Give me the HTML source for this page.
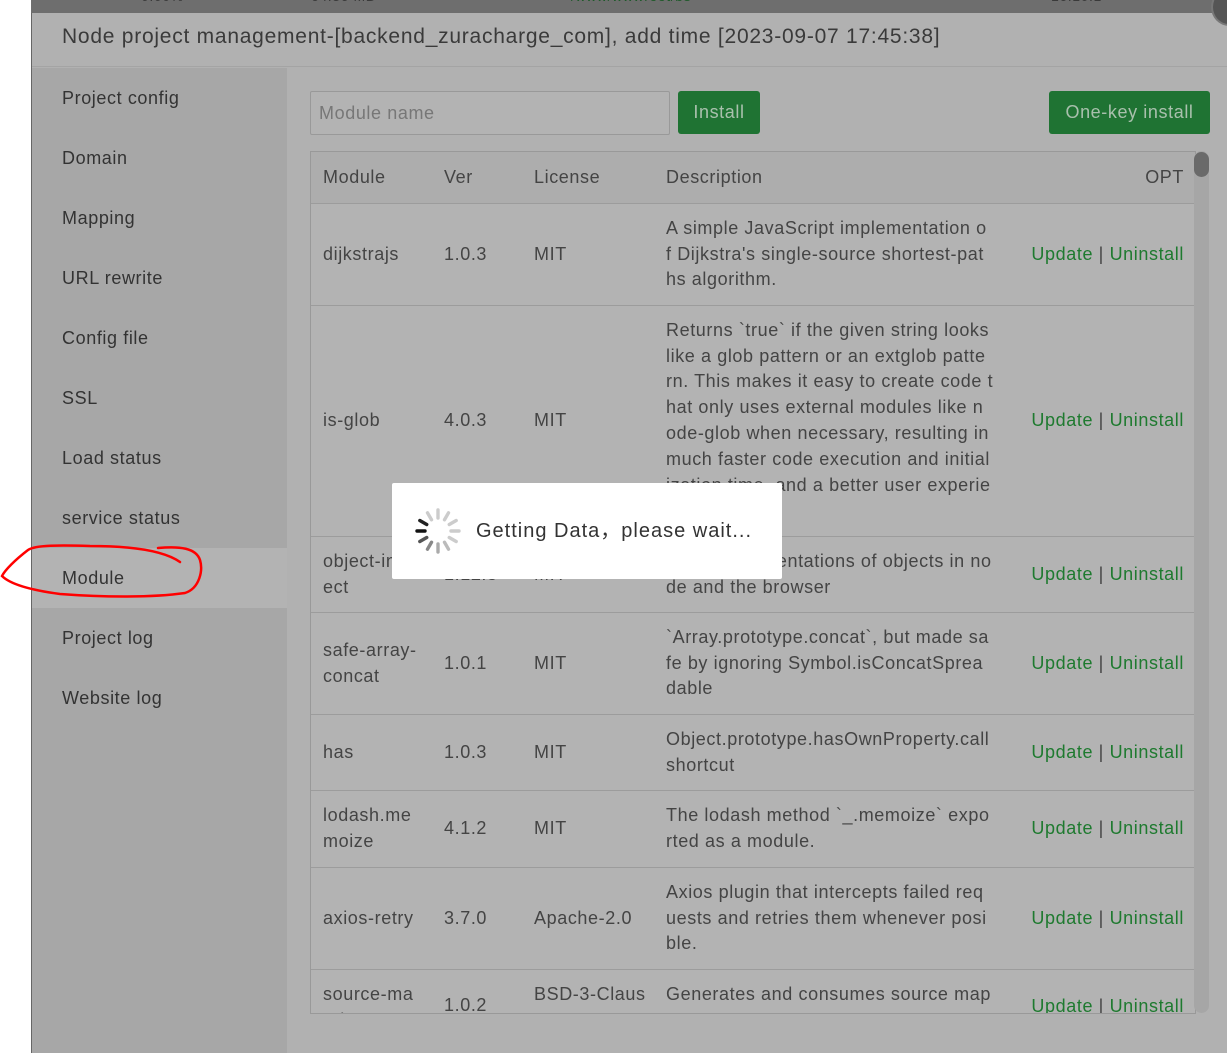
<!DOCTYPE html>
<html><head><meta charset="utf-8">
<style>
*{margin:0;padding:0;box-sizing:border-box}
body{width:1227px;height:1053px;overflow:hidden;background:#fff;font-family:"Liberation Sans","Noto Sans CJK SC",sans-serif;color:#444;font-size:18px;letter-spacing:0.6px;position:relative}
.a{position:absolute}
#top{left:31px;top:0;width:1196px;height:13px;background:#6e6e6e;overflow:hidden;font-size:14px;color:#3a3a3a}
#modal{left:31px;top:13px;width:1196px;height:1040px;background:#b1b1b1;border-left:1px solid #666}
#hdr{left:0;top:0;width:1196px;height:54px;border-bottom:1px solid #a4a4a4;font-size:21px;letter-spacing:0.75px;color:#3a3a3a;padding:10px 0 0 30px;line-height:28px;white-space:nowrap}
#side{left:0;top:55px;width:255px;height:985px;background:#a7a7a7}
.si{position:absolute;left:0;width:255px;height:60px;line-height:60px;padding-left:30px;color:#333;font-size:18px}
.si.act{background:#b3b3b3}
#inp{left:278px;top:78px;width:360px;height:44px;border:1px solid #999;border-radius:2px;background:#b3b3b3;color:#777;padding-left:8px;line-height:42px}
.btn{background:#1f7333;color:#a9c0ad;border-radius:3px;text-align:center;line-height:43px}
#tbl{left:278px;top:138px;width:886px;height:863px;border:1px solid #999;overflow:hidden;background:#b3b3b3}
.row{position:absolute;left:0;width:886px;border-bottom:1px solid #9c9c9c}
.c{position:absolute;top:0;height:100%;display:flex;align-items:center;line-height:25.8px;white-space:nowrap}
.op{right:13px}
.lk{color:#1e7a2f}
#sb{left:1162px;top:138px;width:15px;height:862px;background:#a6a6a6;border-radius:8px}
#th{left:1162px;top:139px;width:15px;height:25px;background:#6a6a6a;border-radius:8px}
#load{left:392px;top:483px;width:390px;height:96px;background:#fff;border-radius:2px;color:#333;font-size:20px;letter-spacing:1px}
</style></head><body>
<div id="top" class="a"><span class="a" style="left:110px;top:-12px">0.00%</span><span class="a" style="left:280px;top:-12px">64.36 MB</span><span class="a" style="left:540px;top:-12px;color:#1f5a2a">/www/wwwroot/bs</span><span class="a" style="left:1020px;top:-12px">16.10.1</span></div>
<div id="modal" class="a">
 <div id="hdr" class="a">Node project management-[backend_zuracharge_com], add time [2023-09-07 17:45:38]</div>
 <div id="side" class="a">
  <div class="si" style="top:0">Project config</div>
  <div class="si" style="top:60px">Domain</div>
  <div class="si" style="top:120px">Mapping</div>
  <div class="si" style="top:180px">URL rewrite</div>
  <div class="si" style="top:240px">Config file</div>
  <div class="si" style="top:300px">SSL</div>
  <div class="si" style="top:360px">Load status</div>
  <div class="si" style="top:420px">service status</div>
  <div class="si act" style="top:480px">Module</div>
  <div class="si" style="top:540px">Project log</div>
  <div class="si" style="top:600px">Website log</div>
 </div>
 <div id="inp" class="a">Module name</div>
 <div class="a btn" style="left:646px;top:78px;width:82px;height:43px">Install</div>
 <div class="a btn" style="left:1017px;top:78px;width:161px;height:43px">One-key install</div>
 <div id="tbl" class="a">
  <div class="row" style="top:0;height:52px;background:#adadad"><div class="c" style="left:12px">Module</div><div class="c" style="left:133px">Ver</div><div class="c" style="left:223px">License</div><div class="c" style="left:355px">Description</div><div class="c op">OPT</div></div>
  <div class="row" style="top:52px;height:102px"><div class="c" style="left:12px">dijkstrajs</div><div class="c" style="left:133px">1.0.3</div><div class="c" style="left:223px">MIT</div><div class="c" style="left:355px">A simple JavaScript implementation o<br>f Dijkstra's single-source shortest-pat<br>hs algorithm.</div><div class="c op"><span class="lk">Update</span>&nbsp;|&nbsp;<span class="lk">Uninstall</span></div></div>
  <div class="row" style="top:154px;height:231px"><div class="c" style="left:12px">is-glob</div><div class="c" style="left:133px">4.0.3</div><div class="c" style="left:223px">MIT</div><div class="c" style="left:355px">Returns `true` if the given string looks<br>like a glob pattern or an extglob patte<br>rn. This makes it easy to create code t<br>hat only uses external modules like n<br>ode-glob when necessary, resulting in<br>much faster code execution and initial<br>ization time, and a better user experie<br>nce.</div><div class="c op"><span class="lk">Update</span>&nbsp;|&nbsp;<span class="lk">Uninstall</span></div></div>
  <div class="row" style="top:385px;height:76px"><div class="c" style="left:12px">object-insp<br>ect</div><div class="c" style="left:133px">1.12.3</div><div class="c" style="left:223px">MIT</div><div class="c" style="left:355px">String representations of objects in no<br>de and the browser</div><div class="c op"><span class="lk">Update</span>&nbsp;|&nbsp;<span class="lk">Uninstall</span></div></div>
  <div class="row" style="top:461px;height:102px"><div class="c" style="left:12px">safe-array-<br>concat</div><div class="c" style="left:133px">1.0.1</div><div class="c" style="left:223px">MIT</div><div class="c" style="left:355px">`Array.prototype.concat`, but made sa<br>fe by ignoring Symbol.isConcatSprea<br>dable</div><div class="c op"><span class="lk">Update</span>&nbsp;|&nbsp;<span class="lk">Uninstall</span></div></div>
  <div class="row" style="top:563px;height:76px"><div class="c" style="left:12px">has</div><div class="c" style="left:133px">1.0.3</div><div class="c" style="left:223px">MIT</div><div class="c" style="left:355px">Object.prototype.hasOwnProperty.call<br>shortcut</div><div class="c op"><span class="lk">Update</span>&nbsp;|&nbsp;<span class="lk">Uninstall</span></div></div>
  <div class="row" style="top:639px;height:77px"><div class="c" style="left:12px">lodash.me<br>moize</div><div class="c" style="left:133px">4.1.2</div><div class="c" style="left:223px">MIT</div><div class="c" style="left:355px">The lodash method `_.memoize` expo<br>rted as a module.</div><div class="c op"><span class="lk">Update</span>&nbsp;|&nbsp;<span class="lk">Uninstall</span></div></div>
  <div class="row" style="top:716px;height:102px"><div class="c" style="left:12px">axios-retry</div><div class="c" style="left:133px">3.7.0</div><div class="c" style="left:223px">Apache-2.0</div><div class="c" style="left:355px">Axios plugin that intercepts failed req<br>uests and retries them whenever posi<br>ble.</div><div class="c op"><span class="lk">Update</span>&nbsp;|&nbsp;<span class="lk">Uninstall</span></div></div>
  <div class="row" style="top:818px;height:80px;border:none"><div class="a" style="left:12px;top:12px;line-height:25.8px">source-ma<br>p-js</div><div class="a" style="left:133px;top:25px">1.0.2</div><div class="a" style="left:223px;top:12px;line-height:25.8px">BSD-3-Claus</div><div class="a" style="left:355px;top:12px;line-height:25.8px">Generates and consumes source map</div><div class="a" style="right:13px;top:26px"><span class="lk">Update</span>&nbsp;|&nbsp;<span class="lk">Uninstall</span></div></div>
 </div>
 <div id="sb" class="a"></div><div id="th" class="a"></div>
</div>
<div class="a" style="left:1211px;top:-12px;width:36px;height:38px;border-radius:50%;background:#555;border:2px solid #777"></div>
<div id="load" class="a">
 <svg class="a" style="left:21px;top:23px" width="50" height="50" viewBox="-25 -25 50 50">
  <g stroke-width="3.4" stroke-linecap="round">
   <line x1="0" y1="-13" x2="0" y2="-21" stroke="#ccc" transform="rotate(0)"/>
   <line x1="0" y1="-13" x2="0" y2="-21" stroke="#ccc" transform="rotate(30)"/>
   <line x1="0" y1="-13" x2="0" y2="-21" stroke="#ccc" transform="rotate(60)"/>
   <line x1="0" y1="-13" x2="0" y2="-21" stroke="#ccc" transform="rotate(90)"/>
   <line x1="0" y1="-13" x2="0" y2="-21" stroke="#ccc" transform="rotate(120)"/>
   <line x1="0" y1="-13" x2="0" y2="-21" stroke="#bbb" transform="rotate(150)"/>
   <line x1="0" y1="-13" x2="0" y2="-21" stroke="#aaa" transform="rotate(180)"/>
   <line x1="0" y1="-13" x2="0" y2="-21" stroke="#888" transform="rotate(210)"/>
   <line x1="0" y1="-13" x2="0" y2="-21" stroke="#555" transform="rotate(240)"/>
   <line x1="0" y1="-13" x2="0" y2="-21" stroke="#111" transform="rotate(270)"/>
   <line x1="0" y1="-13" x2="0" y2="-21" stroke="#222" transform="rotate(300)"/>
   <line x1="0" y1="-13" x2="0" y2="-21" stroke="#ccc" transform="rotate(330)"/>
  </g>
 </svg>
 <div class="a" style="left:84px;top:34px;line-height:28px;white-space:nowrap">Getting Data，please wait...</div>
</div>
<svg class="a" style="left:0;top:0" width="260" height="620">
 <path d="M180,562 C160,548 120,546 90,546 C60,545 35,545 28,550 C15,560 5,570 2,576 C10,584 30,590 60,594 C100,597 150,598 185,593 C200,588 203,570 200,560 C196,548 180,546 158,548" fill="none" stroke="#f00" stroke-width="2.5" stroke-linecap="round"/>
</svg>
</body></html>
